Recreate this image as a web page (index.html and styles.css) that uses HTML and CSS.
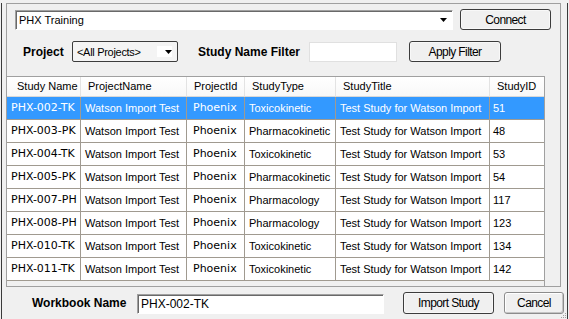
FILE: index.html
```html
<!DOCTYPE html>
<html>
<head>
<meta charset="utf-8">
<link rel="stylesheet" href="styles.css">
</head>
<body>
<div class="window">
  <div class="frame">
    <div class="panel">
      <div class="toprow">
        <div class="combo server">
          <span class="combo-text">PHX Training</span>
          <svg class="arrow" width="7" height="4" viewBox="0 0 7 4"><polygon points="0,0 7,0 3.5,4" fill="#000"/></svg>
        </div>
        <button class="btn connect">Connect</button>
      </div>
      <div class="filterrow">
        <span class="lbl lbl-project">Project</span>
        <div class="pcombo">
          <span class="pcombo-text">&lt;All Projects&gt;</span>
          <span class="pbox"><svg class="arrow" width="7" height="4" viewBox="0 0 7 4"><polygon points="0,0 7,0 3.5,4" fill="#000"/></svg></span>
        </div>
        <span class="lbl lbl-filter">Study Name Filter</span>
        <div class="textbox filter"></div>
        <button class="btn apply">Apply Filter</button>
      </div>
      <div class="grid">
        <div class="row head">
          <div class="c c1">Study Name</div>
          <div class="c c2">ProjectName</div>
          <div class="c c3">ProjectId</div>
          <div class="c c4">StudyType</div>
          <div class="c c5">StudyTitle</div>
          <div class="c c6">StudyID</div>
        </div>
        <div class="row sel">
          <div class="c c1">PHX-002-TK</div><div class="c c2">Watson Import Test</div><div class="c c3">Phoenix</div><div class="c c4">Toxicokinetic</div><div class="c c5">Test Study for Watson Import</div><div class="c c6">51</div>
        </div>
        <div class="row">
          <div class="c c1">PHX-003-PK</div><div class="c c2">Watson Import Test</div><div class="c c3">Phoenix</div><div class="c c4">Pharmacokinetic</div><div class="c c5">Test Study for Watson Import</div><div class="c c6">48</div>
        </div>
        <div class="row">
          <div class="c c1">PHX-004-TK</div><div class="c c2">Watson Import Test</div><div class="c c3">Phoenix</div><div class="c c4">Toxicokinetic</div><div class="c c5">Test Study for Watson Import</div><div class="c c6">53</div>
        </div>
        <div class="row">
          <div class="c c1">PHX-005-PK</div><div class="c c2">Watson Import Test</div><div class="c c3">Phoenix</div><div class="c c4">Pharmacokinetic</div><div class="c c5">Test Study for Watson Import</div><div class="c c6">54</div>
        </div>
        <div class="row">
          <div class="c c1">PHX-007-PH</div><div class="c c2">Watson Import Test</div><div class="c c3">Phoenix</div><div class="c c4">Pharmacology</div><div class="c c5">Test Study for Watson Import</div><div class="c c6">117</div>
        </div>
        <div class="row">
          <div class="c c1">PHX-008-PH</div><div class="c c2">Watson Import Test</div><div class="c c3">Phoenix</div><div class="c c4">Pharmacology</div><div class="c c5">Test Study for Watson Import</div><div class="c c6">123</div>
        </div>
        <div class="row">
          <div class="c c1">PHX-010-TK</div><div class="c c2">Watson Import Test</div><div class="c c3">Phoenix</div><div class="c c4">Toxicokinetic</div><div class="c c5">Test Study for Watson Import</div><div class="c c6">134</div>
        </div>
        <div class="row">
          <div class="c c1">PHX-011-TK</div><div class="c c2">Watson Import Test</div><div class="c c3">Phoenix</div><div class="c c4">Toxicokinetic</div><div class="c c5">Test Study for Watson Import</div><div class="c c6">142</div>
        </div>
      </div>
    </div>
    <div class="bottom">
      <span class="lbl lbl-wb">Workbook Name</span>
      <div class="textbox wb"><span class="wb-text">PHX-002-TK</span></div>
      <button class="btn import">Import Study</button>
      <button class="btn cancel">Cancel</button>
    </div>
    <svg class="grip" width="6" height="6" viewBox="0 0 6 6">
      <rect x="4" y="0" width="1" height="1" fill="#a0a0a0"/>
      <rect x="2" y="2" width="1" height="1" fill="#a0a0a0"/>
      <rect x="4" y="2" width="1" height="1" fill="#a0a0a0"/>
      <rect x="0" y="4" width="1" height="1" fill="#a0a0a0"/>
      <rect x="2" y="4" width="1" height="1" fill="#a0a0a0"/>
      <rect x="4" y="4" width="1" height="1" fill="#a0a0a0"/>
    </svg>
  </div>
</div>
</body>
</html>
```

FILE: styles.css
```css
html, body {
  margin: 0;
  padding: 0;
  background: #f0f0f0;
}
body {
  font-family: "Liberation Sans", Arial, sans-serif;
  font-size: 11px;
  color: #000;
}
.window {
  width: 569px;
  height: 319px;
  padding-left: 1px;
  box-sizing: border-box;
  background: #f0f0f0;
  overflow: hidden;
}
.frame {
  position: relative;
  width: 567px;
  height: 318px;
  box-sizing: border-box;
  border-left: 1px solid #3a3a3a;
  border-right: 1px solid #3a3a3a;
  border-bottom: 1px solid #3a3a3a;
}
.panel {
  margin-left: 4px;
  margin-top: 3px;
  width: 555px;
  height: 284px;
  box-sizing: border-box;
  border: 1px solid #a0a0a0;
  display: flex;
  flex-direction: column;
}
.toprow {
  display: flex;
  align-items: flex-start;
  padding-left: 8px;
  padding-top: 5px;
}
.combo {
  margin-top: 1px;
  width: 438px;
  height: 20px;
  box-sizing: border-box;
  background: #fff;
  border-top: 1px solid #a0a0a0;
  border-left: 1px solid #a0a0a0;
  border-right: 1px solid #fff;
  border-bottom: 1px solid #fff;
  box-shadow: inset 1px 1px 0 #696969;
  display: flex;
  align-items: center;
  justify-content: space-between;
  padding: 0 5px 0 3px;
}
.combo-text {
  font-size: 11px;
  line-height: 18px;
}
.arrow {
  display: block;
}
.btn {
  font-family: "Liberation Sans", Arial, sans-serif;
  font-size: 12px;
  letter-spacing: -0.6px;
  color: #000;
  background: #f0f0f0;
  border: 1px solid #3c3c3c;
  border-radius: 3px;
  padding: 0;
  margin: 0;
  box-sizing: border-box;
  box-shadow: inset 0 0 0 1px #f8f8f8;
}
.connect {
  margin-left: 7px;
  width: 91px;
  height: 21px;
}
.filterrow {
  display: flex;
  align-items: center;
  margin-top: 11px;
  padding-left: 16px;
  height: 21px;
}
.lbl {
  font-weight: bold;
  font-size: 12px;
}
.lbl-project {
  width: 49px;
}
.pcombo {
  width: 106px;
  height: 21px;
  box-sizing: border-box;
  border: 1px solid #3c3c3c;
  border-radius: 2px;
  background: #f4f4f4;
  display: flex;
  align-items: center;
  justify-content: space-between;
  padding-left: 4px;
  padding-right: 5px;
}
.pcombo-text {
  font-size: 11px;
  letter-spacing: -0.3px;
}
.pbox {
  background: #fff;
  width: 15px;
  height: 11px;
  display: flex;
  align-items: center;
  justify-content: flex-end;
}
.lbl-filter {
  margin-left: 20px;
  width: 111px;
}
.textbox {
  box-sizing: border-box;
  background: #fff;
}
.filter {
  width: 88px;
  height: 20px;
  border: 1px solid #e0e0e0;
}
.apply {
  margin-left: 12px;
  width: 92px;
  height: 21px;
}
.grid {
  margin-top: 14px;
  width: 538px;
  flex: 1;
  box-sizing: border-box;
  border-top: 1px solid #a0a0a0;
  border-right: 1px solid #a0a0a0;
  background: #f0f0f0;
}
.row {
  display: grid;
  grid-template-columns: 74px 106px 58px 91px 154px 54px;
  height: 23px;
  background: #fff;
}
.c {
  box-sizing: border-box;
  border-right: 1px solid #a09a90;
  border-bottom: 1px solid #a09a90;
  padding-left: 4px;
  line-height: 22px;
  white-space: nowrap;
  overflow: hidden;
  font-size: 11px;
}
.c6 {
  border-right: none;
  padding-left: 3px;
}
.row .c1, .row .c3 {
  font-family: "DejaVu Sans", Verdana, sans-serif;
}
.row .c3 {
  padding-left: 6px;
}
.row.head {
  height: 20px;
  background: linear-gradient(#ffffff, #f7f7f7);
}
.row.head .c {
  font-family: "Liberation Sans", Arial, sans-serif;
  border-right: 1px solid #e3e3e3;
  border-bottom: 1px solid #d8d8d8;
  line-height: 19px;
  padding-left: 7px;
}
.row.head .c1 {
  padding-left: 10px;
}
.row.head .c6 {
  border-right: none;
}
.row.sel {
  background: #3399ff;
  color: #fff;
}
.bottom {
  display: flex;
  align-items: flex-start;
  padding-top: 5px;
  padding-left: 30px;
}
.lbl-wb {
  width: 105px;
  margin-top: 4px;
}
.wb {
  margin-top: 2px;
  width: 247px;
  height: 20px;
  border-top: 1px solid #a0a0a0;
  border-left: 1px solid #a0a0a0;
  border-right: 1px solid #fff;
  border-bottom: 1px solid #fff;
  box-shadow: inset 1px 1px 0 #696969;
  padding-left: 3px;
  line-height: 18px;
}
.wb-text {
  font-size: 12px;
}
.import {
  margin-left: 19px;
  width: 91px;
  height: 22px;
}
.cancel {
  margin-left: 10px;
  width: 60px;
  height: 22px;
  border: 1px solid #8c8c8c;
  box-shadow: inset 1px 1px 0 #ffffff, inset -1px -1px 0 #c4c4c4;
}
.grip {
  position: absolute;
  right: 0;
  bottom: 1px;
}
```
